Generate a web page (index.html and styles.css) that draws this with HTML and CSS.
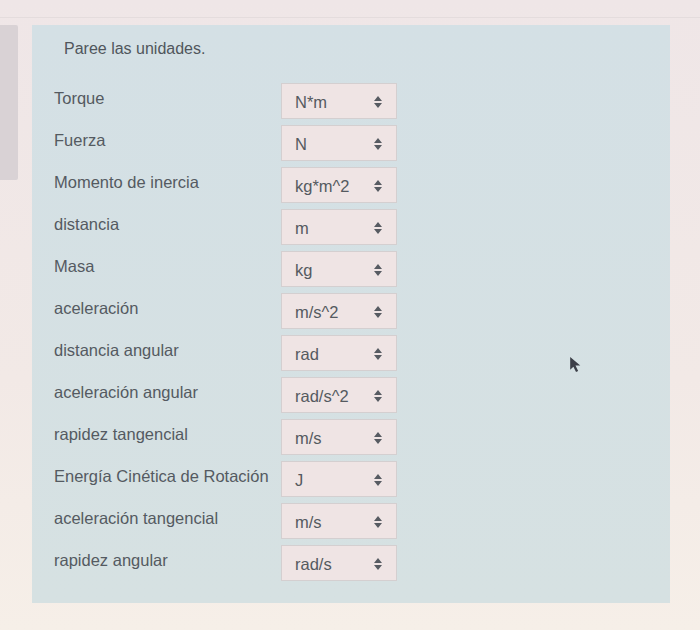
FILE: index.html
```html
<!DOCTYPE html>
<html>
<head>
<meta charset="utf-8">
<link rel="stylesheet" href="styles.css">
</head>
<body>
<div class="page">
  <div class="sidebar"></div>
  <div class="panel">
    <p class="title">Paree las unidades.</p>
    <div class="grid">
      <div class="label">Torque</div><div class="select"><span>N*m</span><svg class="arr" viewBox="0 0 8 12"><path d="M4 0L8 5H0Z M4 12L8 7H0Z"/></svg></div>
      <div class="label">Fuerza</div><div class="select"><span>N</span><svg class="arr" viewBox="0 0 8 12"><path d="M4 0L8 5H0Z M4 12L8 7H0Z"/></svg></div>
      <div class="label">Momento de inercia</div><div class="select"><span>kg*m^2</span><svg class="arr" viewBox="0 0 8 12"><path d="M4 0L8 5H0Z M4 12L8 7H0Z"/></svg></div>
      <div class="label">distancia</div><div class="select"><span>m</span><svg class="arr" viewBox="0 0 8 12"><path d="M4 0L8 5H0Z M4 12L8 7H0Z"/></svg></div>
      <div class="label">Masa</div><div class="select"><span>kg</span><svg class="arr" viewBox="0 0 8 12"><path d="M4 0L8 5H0Z M4 12L8 7H0Z"/></svg></div>
      <div class="label">aceleración</div><div class="select"><span>m/s^2</span><svg class="arr" viewBox="0 0 8 12"><path d="M4 0L8 5H0Z M4 12L8 7H0Z"/></svg></div>
      <div class="label">distancia angular</div><div class="select"><span>rad</span><svg class="arr" viewBox="0 0 8 12"><path d="M4 0L8 5H0Z M4 12L8 7H0Z"/></svg></div>
      <div class="label">aceleración angular</div><div class="select"><span>rad/s^2</span><svg class="arr" viewBox="0 0 8 12"><path d="M4 0L8 5H0Z M4 12L8 7H0Z"/></svg></div>
      <div class="label">rapidez tangencial</div><div class="select"><span>m/s</span><svg class="arr" viewBox="0 0 8 12"><path d="M4 0L8 5H0Z M4 12L8 7H0Z"/></svg></div>
      <div class="label">Energía Cinética de Rotación</div><div class="select"><span>J</span><svg class="arr" viewBox="0 0 8 12"><path d="M4 0L8 5H0Z M4 12L8 7H0Z"/></svg></div>
      <div class="label">aceleración tangencial</div><div class="select"><span>m/s</span><svg class="arr" viewBox="0 0 8 12"><path d="M4 0L8 5H0Z M4 12L8 7H0Z"/></svg></div>
      <div class="label">rapidez angular</div><div class="select"><span>rad/s</span><svg class="arr" viewBox="0 0 8 12"><path d="M4 0L8 5H0Z M4 12L8 7H0Z"/></svg></div>
    </div>
  </div>
  <svg class="cursor" viewBox="0 0 12 16"><path d="M1 1L1 13L4 10L6.5 15L8.5 14L6 9L10.5 9Z"/></svg>
</div>
</body>
</html>
```
FILE: styles.css
```css
html, body {
  margin: 0;
  padding: 0;
}
body {
  width: 700px;
  height: 630px;
  background: linear-gradient(180deg, #efe6e7 0%, #f2e9e6 60%, #f6efe8 100%);
  font-family: "Liberation Sans", Arial, sans-serif;
  overflow: hidden;
}
.page {
  position: relative;
  height: 630px;
  padding-top: 25px;
  box-sizing: border-box;
  display: flex;
}
.page::before {
  content: "";
  position: absolute;
  left: 0;
  right: 0;
  top: 17px;
  height: 1px;
  background: #e4dcdd;
}
.sidebar {
  width: 18px;
  height: 155px;
  background: #d9d2d5;
  border-radius: 0 2px 2px 0;
  flex: none;
}
.panel {
  margin-left: 14px;
  width: 638px;
  height: 578px;
  background: linear-gradient(180deg, #d4e0e5 0%, #d6e1e2 100%);
  box-sizing: border-box;
  padding: 13px 0 0 22px;
}
.title {
  margin: 0 0 24px 10px;
  font-size: 16px;
  color: #50565c;
  line-height: 21px;
}
.grid {
  display: grid;
  grid-template-columns: 227px 116px;
  grid-auto-rows: 36px;
  row-gap: 6px;
}
.label {
  font-size: 16.5px;
  color: #545a61;
  padding-top: 6px;
  line-height: 19px;
  white-space: nowrap;
}
.select {
  background: #efe4e4;
  border: 1px solid #d4cfd0;
  box-sizing: border-box;
  display: flex;
  align-items: center;
  justify-content: space-between;
  padding: 3px 14px 0 13px;
  font-size: 16.5px;
  color: #555a60;
}
.arr {
  width: 8px;
  height: 12px;
  fill: #575b62;
  margin-top: -2px;
}
.cursor {
  position: absolute;
  left: 569px;
  top: 356px;
  width: 13px;
  height: 17px;
  fill: #3c3f48;
}
```
